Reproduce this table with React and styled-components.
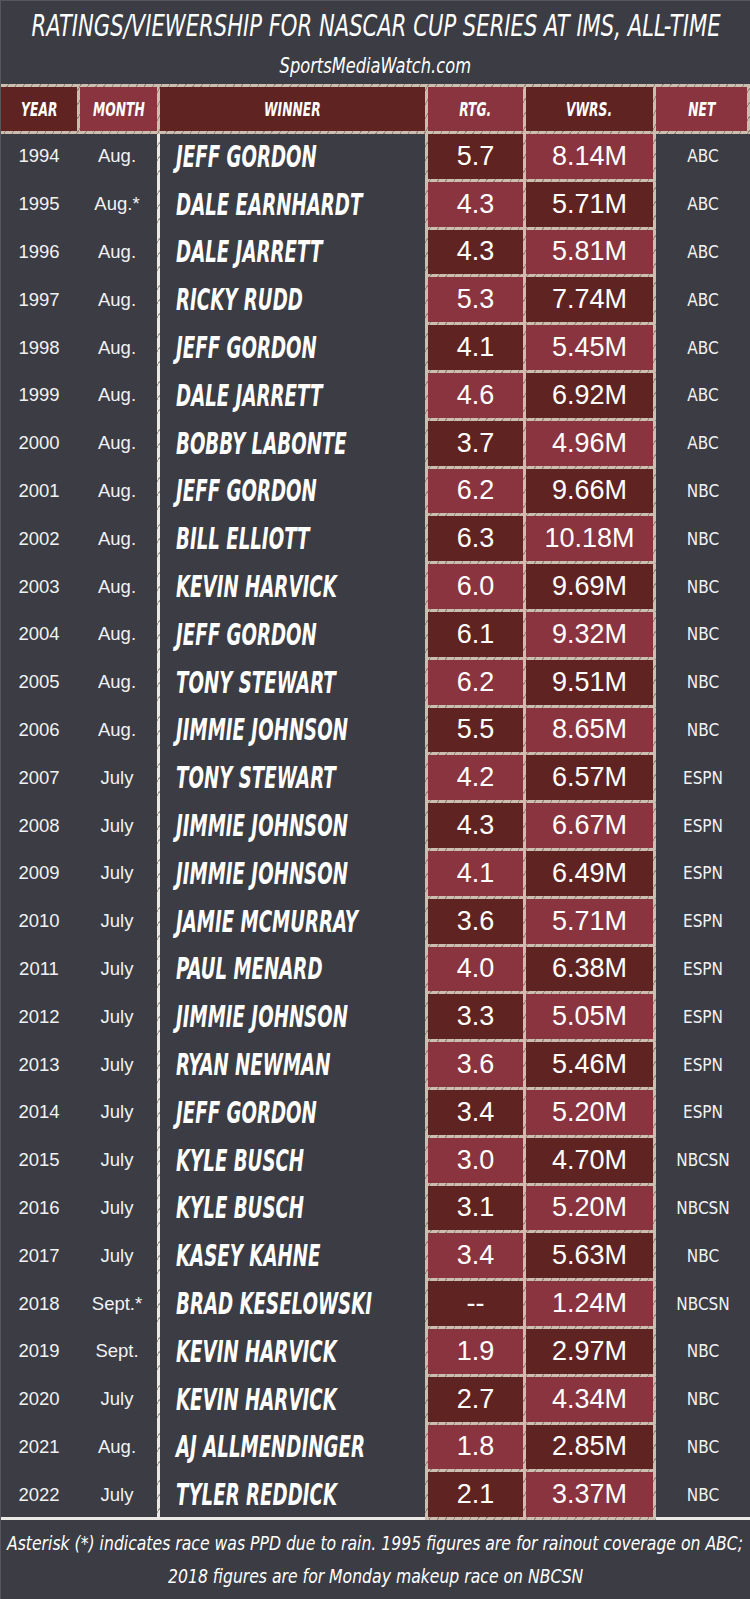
import React from "react";
import styled, { createGlobalStyle, css } from "styled-components";

const races = [
  ["1994", "Aug.", "JEFF GORDON", "5.7", "8.14M", "ABC"],
  ["1995", "Aug.*", "DALE EARNHARDT", "4.3", "5.71M", "ABC"],
  ["1996", "Aug.", "DALE JARRETT", "4.3", "5.81M", "ABC"],
  ["1997", "Aug.", "RICKY RUDD", "5.3", "7.74M", "ABC"],
  ["1998", "Aug.", "JEFF GORDON", "4.1", "5.45M", "ABC"],
  ["1999", "Aug.", "DALE JARRETT", "4.6", "6.92M", "ABC"],
  ["2000", "Aug.", "BOBBY LABONTE", "3.7", "4.96M", "ABC"],
  ["2001", "Aug.", "JEFF GORDON", "6.2", "9.66M", "NBC"],
  ["2002", "Aug.", "BILL ELLIOTT", "6.3", "10.18M", "NBC"],
  ["2003", "Aug.", "KEVIN HARVICK", "6.0", "9.69M", "NBC"],
  ["2004", "Aug.", "JEFF GORDON", "6.1", "9.32M", "NBC"],
  ["2005", "Aug.", "TONY STEWART", "6.2", "9.51M", "NBC"],
  ["2006", "Aug.", "JIMMIE JOHNSON", "5.5", "8.65M", "NBC"],
  ["2007", "July", "TONY STEWART", "4.2", "6.57M", "ESPN"],
  ["2008", "July", "JIMMIE JOHNSON", "4.3", "6.67M", "ESPN"],
  ["2009", "July", "JIMMIE JOHNSON", "4.1", "6.49M", "ESPN"],
  ["2010", "July", "JAMIE MCMURRAY", "3.6", "5.71M", "ESPN"],
  ["2011", "July", "PAUL MENARD", "4.0", "6.38M", "ESPN"],
  ["2012", "July", "JIMMIE JOHNSON", "3.3", "5.05M", "ESPN"],
  ["2013", "July", "RYAN NEWMAN", "3.6", "5.46M", "ESPN"],
  ["2014", "July", "JEFF GORDON", "3.4", "5.20M", "ESPN"],
  ["2015", "July", "KYLE BUSCH", "3.0", "4.70M", "NBCSN"],
  ["2016", "July", "KYLE BUSCH", "3.1", "5.20M", "NBCSN"],
  ["2017", "July", "KASEY KAHNE", "3.4", "5.63M", "NBC"],
  ["2018", "Sept.*", "BRAD KESELOWSKI", "--", "1.24M", "NBCSN"],
  ["2019", "Sept.", "KEVIN HARVICK", "1.9", "2.97M", "NBC"],
  ["2020", "July", "KEVIN HARVICK", "2.7", "4.34M", "NBC"],
  ["2021", "Aug.", "AJ ALLMENDINGER", "1.8", "2.85M", "NBC"],
  ["2022", "July", "TYLER REDDICK", "2.1", "3.37M", "NBC"],
];

const DARK = "#5f2422";
const LIGHT = "#8a3440";
const CONDENSED = `"DejaVu Sans Condensed", "DejaVu Sans", sans-serif`;

// tan / white rules with the little diagonal dashes
const hatch = (base) => css`
  background-color: ${base};
  background-image: repeating-linear-gradient(
    120deg,
    transparent 0 6px,
    rgba(110, 90, 75, 0.55) 6px 7px
  );
`;

const GlobalStyle = createGlobalStyle`
  html, body {
    margin: 0;
    padding: 0;
    background: #3b3c44;
  }
`;

const Page = styled.div`
  width: 750px;
  min-height: 1599px;
  box-sizing: border-box;
  border-top: 1px solid #55565e;
  border-left: 1px solid #55565e;
  background: #3b3c44;
  color: #fff;
  font-family: "Liberation Sans", Arial, sans-serif;
  overflow: hidden;
`;

const Title = styled.h1`
  margin: 0;
  padding-top: 7px;
  display: flex;
  justify-content: center;
  font: italic 400 30px/36px ${CONDENSED};
  white-space: nowrap;
`;

const Squeeze = styled.span`
  display: inline-block;
  flex-shrink: 0;
  white-space: nowrap;
  transform: scaleX(${(p) => p.$x || 0.85});
  transform-origin: ${(p) => p.$origin || "center"};
`;

const Source = styled.div`
  margin-top: 9px;
  display: flex;
  justify-content: center;
  font: italic 400 21px/26px ${CONDENSED};
`;

const Head = styled.div`
  margin-top: 5px;
  display: grid;
  grid-template-columns: 76px 77px 265px 95px 127px 1fr;
  gap: 3px;
  padding: 3px 3px 3px 0;
  ${hatch("#cbbdaf")}
`;

const HeadCell = styled.div`
  height: 44px;
  display: flex;
  align-items: center;
  justify-content: center;
  background: ${(p) => (p.$tone === "light" ? LIGHT : DARK)};
  font: italic 700 19px ${CONDENSED};
`;

const Row = styled.div`
  display: grid;
  grid-template-columns: 76px 80px 3px 265px 231px 1fr;
  height: 47.8px;
  ${(p) =>
    p.$last &&
    css`
      background: linear-gradient(to top, #ece8e3 3px, transparent 3px);
    `}
`;

const Plain = styled.div`
  display: flex;
  align-items: center;
  justify-content: center;
  padding-bottom: 3px;
  font-size: 18.5px;
  color: #f2f2f2;
`;

const Net = styled(Plain)`
  font: 400 17px ${CONDENSED};
`;

const Divider = styled.div`
  ${hatch("#ece8e3")}
`;

const Winner = styled.div`
  display: flex;
  align-items: center;
  padding: 0 0 3px 16px;
  font: italic 700 30px ${CONDENSED};
  white-space: nowrap;
`;

const StatGroup = styled.div`
  display: grid;
  grid-template-columns: 95px 127px;
  gap: 3px;
  padding: 0 3px 3px;
  ${hatch("#cbbdaf")}
`;

const Stat = styled.div`
  display: flex;
  align-items: center;
  justify-content: center;
  background: ${(p) => (p.$tone === "light" ? LIGHT : DARK)};
  font-size: 27px;
`;

const Note = styled.div`
  padding-top: 7px;
  font: italic 400 20px/33px ${CONDENSED};
`;

const NoteLine = styled.div`
  display: flex;
  justify-content: center;
`;

const App = () => {
  return (
    <Page>
      <GlobalStyle />
      <Title>
        <Squeeze $x={0.783}>RATINGS/VIEWERSHIP FOR NASCAR CUP SERIES AT IMS, ALL-TIME</Squeeze>
      </Title>
      <Source>
        <Squeeze $x={0.86}>SportsMediaWatch.com</Squeeze>
      </Source>
      <Head>
        <HeadCell>
          <Squeeze $x={0.72}>YEAR</Squeeze>
        </HeadCell>
        <HeadCell $tone="light">
          <Squeeze $x={0.72}>MONTH</Squeeze>
        </HeadCell>
        <HeadCell>
          <Squeeze $x={0.72}>WINNER</Squeeze>
        </HeadCell>
        <HeadCell $tone="light">
          <Squeeze $x={0.72}>RTG.</Squeeze>
        </HeadCell>
        <HeadCell>
          <Squeeze $x={0.72}>VWRS.</Squeeze>
        </HeadCell>
        <HeadCell $tone="light">
          <Squeeze $x={0.72}>NET</Squeeze>
        </HeadCell>
      </Head>
      {races.map(([year, month, winner, rtg, vwrs, net], i) => {
        const even = i % 2 === 0;
        return (
          <Row key={year} $last={i === races.length - 1}>
            <Plain>{year}</Plain>
            <Plain>{month}</Plain>
            <Divider />
            <Winner>
              <Squeeze $x={0.675} $origin="left">
                {winner}
              </Squeeze>
            </Winner>
            <StatGroup>
              <Stat $tone={even ? "dark" : "light"}>{rtg}</Stat>
              <Stat $tone={even ? "light" : "dark"}>{vwrs}</Stat>
            </StatGroup>
            <Net>{net}</Net>
          </Row>
        );
      })}
      <Note>
        <NoteLine>
          <Squeeze $x={0.87}>
            Asterisk (*) indicates race was PPD due to rain. 1995 figures are for rainout coverage on ABC;
          </Squeeze>
        </NoteLine>
        <NoteLine>
          <Squeeze $x={0.87}>2018 figures are for Monday makeup race on NBCSN</Squeeze>
        </NoteLine>
      </Note>
    </Page>
  );
};

export default App;
